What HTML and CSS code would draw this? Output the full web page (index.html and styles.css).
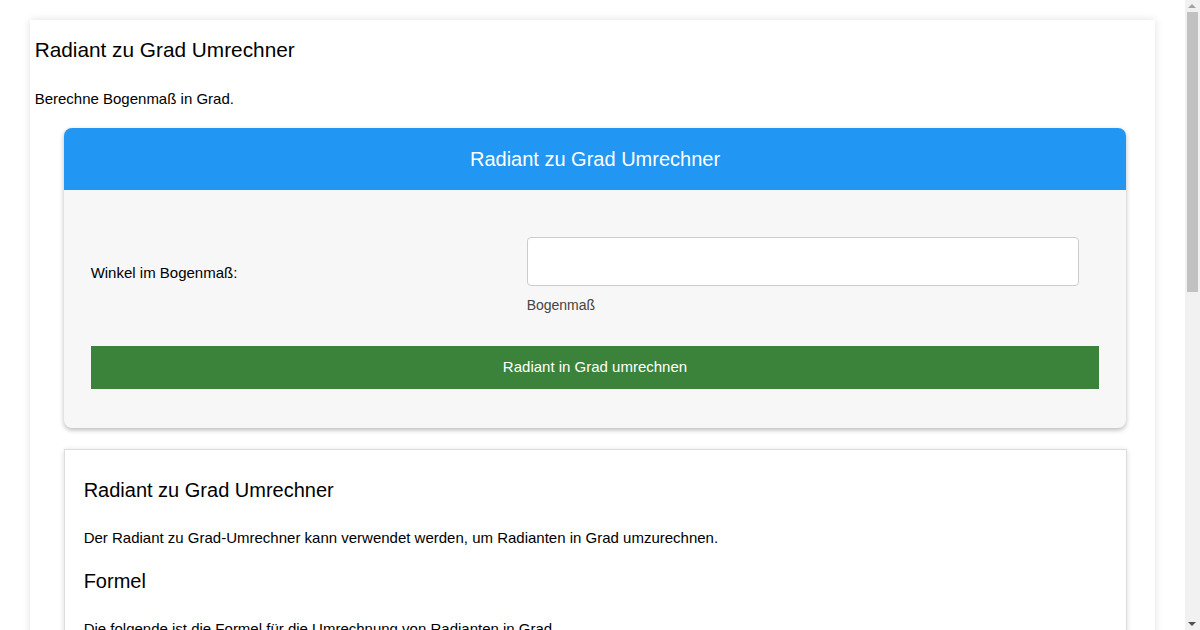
FILE: index.html
```html
<!DOCTYPE html>
<html lang="de">
<head>
<meta charset="utf-8">
<title>Radiant zu Grad Umrechner</title>
<link rel="stylesheet" href="styles.css">
</head>
<body>
<div class="page">
  <h1 class="page-title">Radiant zu Grad Umrechner</h1>
  <p class="page-lead">Berechne Bogenmaß in Grad.</p>

  <div class="calc">
    <div class="calc-head">Radiant zu Grad Umrechner</div>
    <div class="calc-body">
      <div class="calc-row">
        <label class="calc-label" for="rad">Winkel im Bogenmaß:</label>
        <div class="calc-field">
          <input class="calc-input" id="rad" type="text">
          <div class="calc-hint">Bogenmaß</div>
        </div>
      </div>
      <button class="calc-btn" type="button">Radiant in Grad umrechnen</button>
    </div>
  </div>

  <div class="info">
    <h2 class="info-h">Radiant zu Grad Umrechner</h2>
    <p class="info-p">Der Radiant zu Grad-Umrechner kann verwendet werden, um Radianten in Grad umzurechnen.</p>
    <h3 class="info-h">Formel</h3>
    <p class="info-p">Die folgende ist die Formel für die Umrechnung von Radianten in Grad.</p>
    <p class="info-p formula">Grad = Radiant × 180 / π</p>
    <h3 class="info-h">Beispiel</h3>
    <p class="info-p">Wandle 2 Radiant in Grad um.</p>
    <p class="info-p">Grad = 2 × 180 / π = 114,5916°</p>
    <h3 class="info-h">Umrechnungstabelle</h3>
    <p class="info-p">1 rad = 57,2958°</p>
    <p class="info-p">2 rad = 114,5916°</p>
    <p class="info-p">3 rad = 171,8873°</p>
  </div>
</div>

<div class="scrollbar" aria-hidden="true">
  <div class="sb-up"></div>
  <div class="sb-thumb"></div>
  <div class="sb-down"></div>
</div>
</body>
</html>
```

FILE: styles.css
```css
html, body {
  margin: 0;
  padding: 0;
  background: #ffffff;
}

html {
  overflow: hidden;
}

body {
  width: calc(100% - 15px);
  font-family: "Liberation Sans", Arial, sans-serif;
  color: #000;
  font-size: 15px;
}

.page {
  width: 95%;
  margin: 20px auto 20px;
  padding: 1px 5px 30px;
  box-sizing: border-box;
  background: #fff;
  box-shadow: 0 0 8px rgba(0, 0, 0, 0.12);
}

.page-title {
  font-size: 20.8px;
  font-weight: normal;
  line-height: 24px;
  margin: 17px 0 28px;
}

.page-lead {
  margin: 0 0 21px;
  line-height: 17px;
}

.calc {
  margin: 0 24px 0 29px;
  border-radius: 8px;
  background: #f7f7f7;
  box-shadow: 0 2px 5px rgba(0, 0, 0, 0.28);
  overflow: hidden;
}

.calc-head {
  height: 62px;
  background: #2196f3;
  color: #fff;
  font-size: 20px;
  display: flex;
  align-items: center;
  justify-content: center;
}

.calc-body {
  padding: 47px 27px 39px;
}

.calc-row {
  display: grid;
  grid-template-columns: 436px 1fr;
  align-items: center;
}

.calc-label {
  font-size: 15px;
  padding-bottom: 5px;
}

.calc-input {
  display: block;
  width: calc(100% - 20px);
  height: 49px;
  box-sizing: border-box;
  border: 1px solid #cccccc;
  border-radius: 4px;
  background: #fff;
  font-size: 15px;
  padding: 0 10px;
}

.calc-hint {
  margin-top: 11px;
  font-size: 14px;
  line-height: 16px;
  color: #444;
}

.calc-btn {
  display: block;
  width: 100%;
  height: 43px;
  margin-top: 33px;
  padding: 0 0 2px;
  border: 0;
  background: #3b833a;
  color: #fff;
  font-family: "Liberation Sans", Arial, sans-serif;
  font-size: 15px;
}

.info {
  margin: 21px 23px 0 29px;
  padding: 5px 19px 30px;
  border: 1px solid #dddddd;
  background: #fff;
  box-shadow: 0 1px 5px rgba(0, 0, 0, 0.15);
}

.info-h {
  font-size: 20px;
  font-weight: normal;
  line-height: 23px;
  margin: 24px 0 27px;
}

.info-p {
  margin: 0 0 15px;
  line-height: 17px;
}

.formula {
  font-weight: bold;
}

/* simulated browser scrollbar */
.scrollbar {
  position: fixed;
  top: 0;
  right: 0;
  width: 15px;
  height: 100%;
  background: #f1f1f1;
}

.sb-thumb {
  position: absolute;
  left: 2px;
  right: 2px;
  top: 12px;
  height: 280px;
  background: #c1c1c1;
}

.sb-up,
.sb-down {
  position: absolute;
  left: 3px;
  width: 0;
  height: 0;
  border-left: 4px solid transparent;
  border-right: 4px solid transparent;
}

.sb-up {
  top: 4px;
  border-bottom: 4px solid #a3a3a3;
}

.sb-down {
  bottom: 4px;
  border-top: 4px solid #505050;
}
```
